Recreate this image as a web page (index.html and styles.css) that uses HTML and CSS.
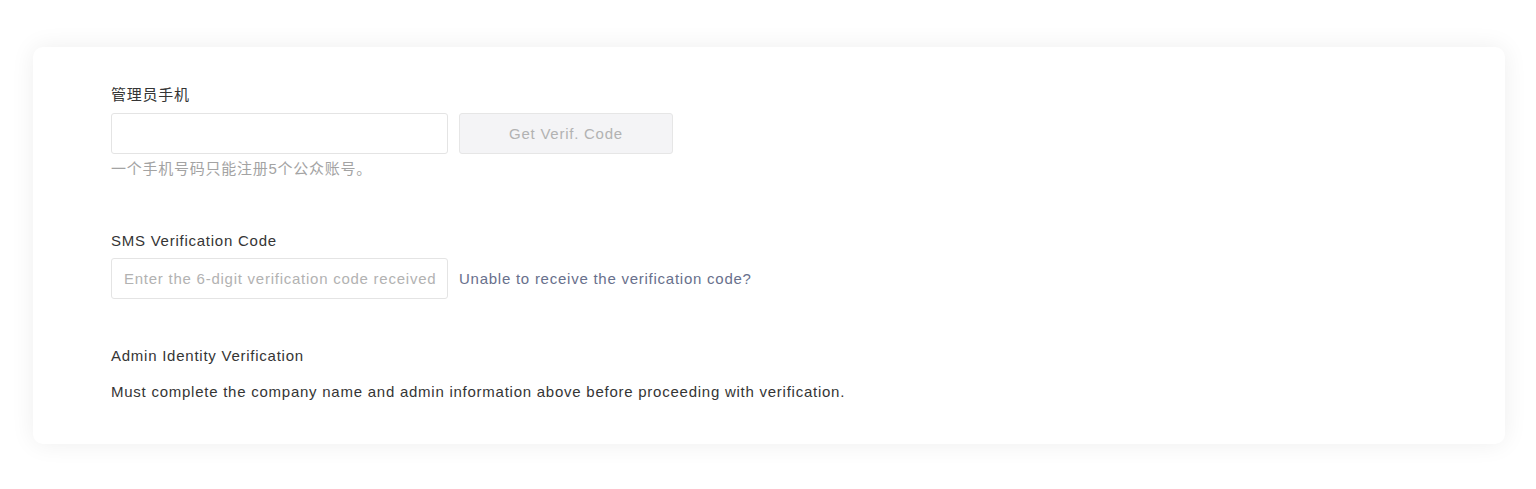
FILE: index.html
```html
<!DOCTYPE html>
<html lang="zh-CN">
<head>
<meta charset="utf-8">
<title>Admin</title>
<link rel="stylesheet" href="styles.css">
</head>
<body>
<div class="page">
  <div class="card">
    <div class="field">
      <div class="label">管理员手机</div>
      <div class="row">
        <input class="input" type="text">
        <button class="btn" disabled>Get Verif. Code</button>
      </div>
      <div class="hint">一个手机号码只能注册5个公众账号。</div>
    </div>
    <div class="field field-sms">
      <div class="label">SMS Verification Code</div>
      <div class="row">
        <input class="input input-code" type="text" placeholder="Enter the 6-digit verification code received">
        <a class="link" href="#">Unable to receive the verification code?</a>
      </div>
    </div>
    <div class="field field-admin">
      <div class="label">Admin Identity Verification</div>
      <div class="desc">Must complete the company name and admin information above before proceeding with verification.</div>
    </div>
  </div>
</div>
</body>
</html>
```
FILE: styles.css
```css
html, body {
  margin: 0;
  padding: 0;
  background: #ffffff;
}
body {
  font-family: "Liberation Sans", "Noto Sans CJK SC", sans-serif;
  font-size: 15px;
  letter-spacing: 0.75px;
  color: #353535;
}
.page {
  padding: 47px 31px 45px 33px;
}
.card {
  background: #fff;
  border-radius: 10px;
  box-shadow: 0 0 24px rgba(0, 0, 0, 0.07);
  padding: 37px 78px 42px 78px;
  height: 397px;
  box-sizing: border-box;
}
.label {
  line-height: 22px;
  margin-bottom: 7px;
}
.row {
  display: flex;
  align-items: center;
  gap: 11px;
}
.input {
  width: 337px;
  height: 41px;
  box-sizing: border-box;
  border: 1px solid #e4e4e4;
  border-radius: 3px;
  padding: 0 12px;
  font-family: inherit;
  font-size: 15px;
  letter-spacing: 0.75px;
  color: #353535;
  outline: none;
  background: #fff;
}
.input-code {
  padding-right: 0;
}
.input::placeholder {
  color: #b2b2b2;
}
.btn {
  width: 214px;
  height: 41px;
  box-sizing: border-box;
  border: 1px solid #e6e6e6;
  border-radius: 3px;
  background: #f4f4f6;
  color: #b2b2b2;
  font-family: inherit;
  font-size: 15px;
  letter-spacing: 0.75px;
}
.hint {
  color: #a3a3a3;
  margin-top: 4px;
  line-height: 22px;
}
.field-sms {
  margin-top: 50px;
}
.field-sms .label {
  margin-bottom: 6px;
}
.link {
  color: #68708c;
  text-decoration: none;
}
.field-admin {
  margin-top: 46px;
}
.field-admin .label {
  margin-bottom: 14px;
}
.desc {
  line-height: 22px;
}
```
